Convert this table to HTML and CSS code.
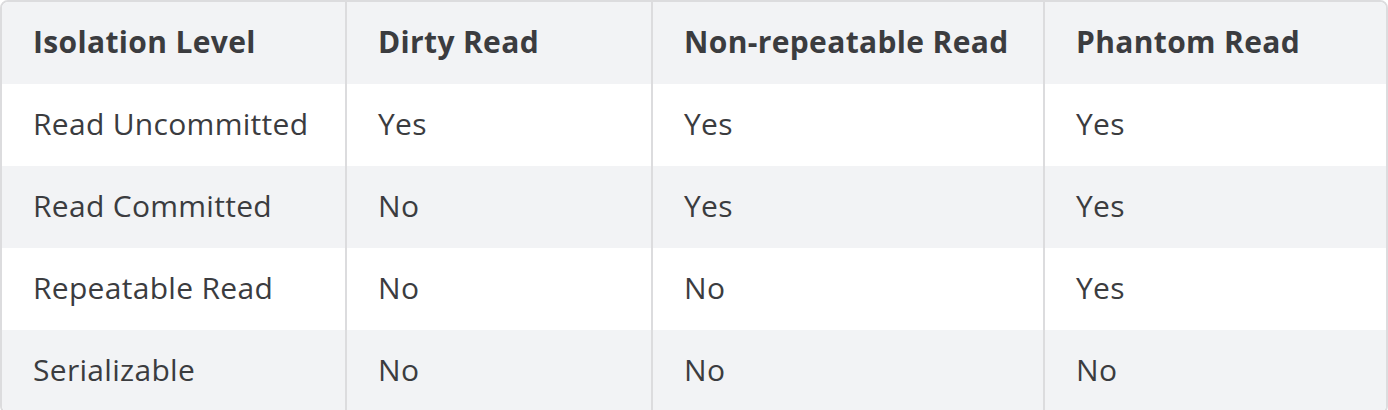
FILE: index.html
```html
<!DOCTYPE html>
<html>
<head>
<meta charset="utf-8">
<link rel="stylesheet" href="styles.css">
</head>
<body>
<div class="wrap">
<table class="iso">
  <colgroup>
    <col class="c1"><col class="c2"><col class="c3"><col class="c4">
  </colgroup>
  <thead>
    <tr><th>Isolation Level</th><th>Dirty Read</th><th>Non-repeatable Read</th><th>Phantom Read</th></tr>
  </thead>
  <tbody>
    <tr><td>Read Uncommitted</td><td>Yes</td><td>Yes</td><td>Yes</td></tr>
    <tr><td>Read Committed</td><td>No</td><td>Yes</td><td>Yes</td></tr>
    <tr><td>Repeatable Read</td><td>No</td><td>No</td><td>Yes</td></tr>
    <tr><td>Serializable</td><td>No</td><td>No</td><td>No</td></tr>
  </tbody>
</table>
</div>
</body>
</html>
```
FILE: styles.css
```css
html, body { margin: 0; padding: 0; background: #ffffff; }
.wrap { width: 1388px; height: 410px; }
.iso {
  width: 1388px;
  height: 410px;
  border-collapse: separate;
  border-spacing: 0;
  border: 2px solid #dcdcde;
  border-radius: 8px;
  overflow: hidden;
  box-sizing: border-box;
  table-layout: fixed;
  font-family: "Open Sans", Lato, sans-serif;
  color: #3b3c3f;
  font-size: 30px;
  letter-spacing: 0.3px;
}
.c1 { width: 343px; }
.c2 { width: 306px; }
.c3 { width: 392px; }
.c4 { width: auto; }
.iso th, .iso td {
  text-align: left;
  padding: 0 0 4px 31px;
  height: 82px;
  box-sizing: border-box;
  border-left: 2px solid #dcdcde;
  vertical-align: middle;
}
.iso th:first-child, .iso td:first-child { border-left: none; }
.iso th { font-weight: 700; background: #f2f3f5; letter-spacing: 0.35px; }
.iso td { font-weight: 400; }
.iso tbody tr:nth-child(even) td { background: #f2f3f5; }
.iso tbody tr:nth-child(odd) td { background: #ffffff; }
```
